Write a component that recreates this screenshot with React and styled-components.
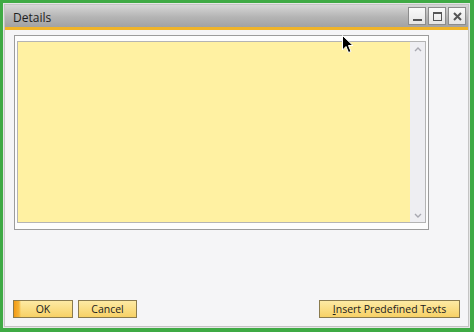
import styled, { createGlobalStyle } from "styled-components";

const Global = createGlobalStyle`
  html, body { margin: 0; padding: 0; background: #fff; }
  body { font-family: "Open Sans", "DejaVu Sans", sans-serif; }
`;

const Frame = styled.div`
  width: 474px;
  height: 332px;
  box-sizing: border-box;
  border: 3px solid #3faa45;
  border-right-width: 4px;
  border-bottom-width: 4px;
  background: #e6e6e6;
  padding: 1px;
  position: relative;
`;

const Window = styled.div`
  height: 100%;
  box-sizing: border-box;
  border: 1px solid #c4c4c4;
  background: #f5f5f7;
  display: flex;
  flex-direction: column;
`;

const TitleBar = styled.div`
  height: 22px;
  flex-shrink: 0;
  display: flex;
  align-items: center;
  justify-content: space-between;
  padding: 0 2px 0 8px;
  background: linear-gradient(#d6d6d6, #b4b4b4 55%, #a2a2a2);
  border-bottom: 3px solid #f0b428;
`;

const Title = styled.span`
  font-size: 12px;
  color: #1e1e1e;
  padding-top: 2px;
`;

const Controls = styled.div`
  display: flex;
  gap: 2px;
`;

const Ctrl = styled.div`
  width: 18px;
  height: 18px;
  box-sizing: border-box;
  border: 1px solid #8c8c8c;
  background: linear-gradient(#fafafa, #e4e4e4);
  display: flex;
  align-items: center;
  justify-content: center;
`;

const Body = styled.div`
  flex: 1;
  display: flex;
  flex-direction: column;
  padding: 5px 8px 8px 9px;
`;

const Panel = styled.div`
  width: 415px;
  height: 195px;
  flex-shrink: 0;
  box-sizing: border-box;
  border: 1px solid #9c9c9c;
  background: #fdfdfd;
  padding: 5px 2px 6px 2px;
`;

const TextBox = styled.div`
  height: 100%;
  box-sizing: border-box;
  border: 1px solid #b4b4b4;
  background: #fff1a2;
  display: flex;
  justify-content: flex-end;
`;

const Scroll = styled.div`
  width: 15px;
  background: #eeeef2;
  display: flex;
  flex-direction: column;
  justify-content: space-between;
  align-items: center;
  padding: 5px 0 4px;
`;

const Footer = styled.div`
  margin-top: auto;
  margin-left: -1px;
  display: flex;
  align-items: center;
  gap: 5px;
`;

const Button = styled.button`
  width: ${(p) => p.$w}px;
  height: 18px;
  flex-shrink: 0;
  box-sizing: border-box;
  border: 1px solid #8a7b4e;
  background: ${(p) =>
    p.$focus
      ? "linear-gradient(90deg, #f29a16 0, #f5b437 5px, transparent 7px), linear-gradient(#fdeaa4, #f7d166)"
      : "linear-gradient(#fdeaa4, #f7d166)"};
  font-family: "Open Sans", "DejaVu Sans", sans-serif;
  font-size: 10.5px;
  color: #202020;
  padding: 0;
  margin-left: ${(p) => (p.$right ? "auto" : "0")};
  u { text-decoration: underline; }
`;

const Cursor = styled.svg`
  position: absolute;
  left: 339px;
  top: 32px;
`;

export default function App() {
  return (
    <>
      <Global />
      <Frame>
        <Window>
          <TitleBar>
            <Title>Details</Title>
            <Controls>
              <Ctrl>
                <svg width="11" height="11" viewBox="0 0 11 11">
                  <rect x="1" y="8" width="9" height="2" fill="#555" />
                </svg>
              </Ctrl>
              <Ctrl>
                <svg width="11" height="11" viewBox="0 0 11 11">
                  <rect x="1.5" y="1.5" width="8" height="8" fill="none" stroke="#555" strokeWidth="1" />
                  <rect x="1" y="1" width="9" height="2" fill="#555" />
                </svg>
              </Ctrl>
              <Ctrl>
                <svg width="11" height="11" viewBox="0 0 11 11">
                  <path d="M2 2 L9 9 M9 2 L2 9" stroke="#555" strokeWidth="2" />
                </svg>
              </Ctrl>
            </Controls>
          </TitleBar>
          <Body>
            <Panel>
              <TextBox>
                <Scroll>
                  <svg width="8" height="5" viewBox="0 0 8 5">
                    <path d="M1 4 L4 1 L7 4" fill="none" stroke="#a8a8b0" strokeWidth="1.4" />
                  </svg>
                  <svg width="8" height="5" viewBox="0 0 8 5">
                    <path d="M1 1 L4 4 L7 1" fill="none" stroke="#a8a8b0" strokeWidth="1.4" />
                  </svg>
                </Scroll>
              </TextBox>
            </Panel>
            <Footer>
              <Button $w={60} $focus>OK</Button>
              <Button $w={59}>Cancel</Button>
              <Button $w={141} $right>
                <u>I</u>nsert Predefined Texts
              </Button>
            </Footer>
          </Body>
        </Window>
        <Cursor width="12" height="19" viewBox="0 0 12 19">
          <path d="M0.5 0.5 L0.5 15 L4 11.5 L6.5 17.5 L9 16.5 L6.5 10.5 L11 10.5 Z" fill="#000" stroke="#fff" strokeWidth="1" />
        </Cursor>
      </Frame>
    </>
  );
}
